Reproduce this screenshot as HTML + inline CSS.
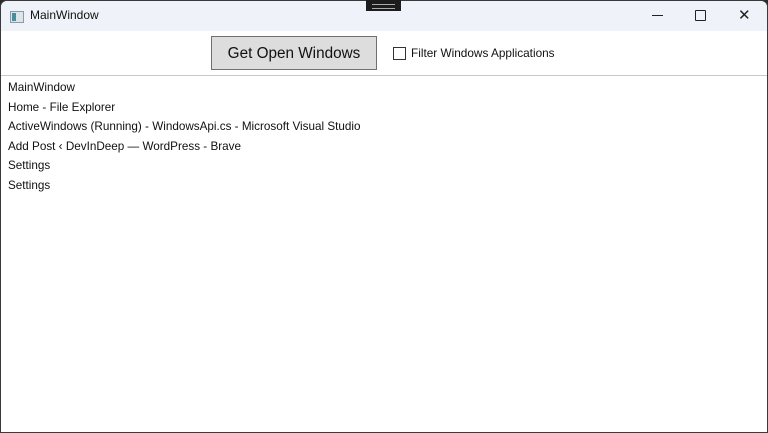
<!DOCTYPE html>
<html><head><meta charset="utf-8"><style>
html,body{margin:0;padding:0;background:#2b2b2b;}
body{width:768px;height:433px;overflow:hidden;position:relative;font-family:"Segoe UI","Liberation Sans",sans-serif;}
.win{position:absolute;left:0;top:0;width:766px;height:431px;border:1px solid #3a3a3a;border-radius:7px 7px 0 0;background:#fff;overflow:hidden;}
.title{position:absolute;left:0;top:0;right:0;height:30px;background:#eff2f8;}
.title .t{position:absolute;left:29px;top:7px;font-size:12px;color:#111;}
.icon{position:absolute;left:9px;top:10px;width:12px;height:10px;border:1px solid #8a9aa8;background:#dde4ea;}
.icon:before{content:"";position:absolute;left:1px;top:1px;width:4px;height:8px;background:#4a8d9c;}
.grip{position:absolute;left:366px;top:0;width:35px;height:11px;background:#1c1c1c;}
.grip:before{content:"";position:absolute;left:6px;top:4px;width:23px;height:3px;border-top:1px solid #aaa;border-bottom:1px solid #aaa;}
.min{position:absolute;left:651px;top:14px;width:11px;height:1px;background:#222;}
.max{position:absolute;left:694px;top:9px;width:9px;height:9px;border:1px solid #222;border-radius:1px;}
.cls{position:absolute;left:737px;top:7px;font-size:15px;color:#222;line-height:15px;}
.btn{position:absolute;left:210px;top:35px;width:164px;height:32px;border:1px solid #707070;background:#dddddd;font-size:15.3px;color:#111;text-align:center;line-height:34px;}
.cb{position:absolute;left:392px;top:46px;width:11px;height:11px;border:1px solid #333;background:#fff;}
.cbl{position:absolute;left:410px;top:45px;font-size:11.8px;color:#111;}
.sep{position:absolute;left:0;right:0;top:74px;height:1px;background:#c8c8c8;}
.list{position:absolute;left:7px;top:77px;font-size:11.7px;color:#111;line-height:19.6px;}
</style></head><body>
<div class="win">
<div class="title"><div class="icon"></div><div class="t">MainWindow</div>
<div class="min"></div><div class="max"></div><div class="cls">✕</div></div>
<div class="btn">Get Open Windows</div>
<div class="cb"></div><div class="cbl">Filter Windows Applications</div>
<div class="sep"></div>
<div class="list">MainWindow<br>Home - File Explorer<br>ActiveWindows (Running) - WindowsApi.cs - Microsoft Visual Studio<br>Add Post ‹ DevInDeep — WordPress - Brave<br>Settings<br>Settings</div>
</div>
<div class="grip"></div>
</body></html>
